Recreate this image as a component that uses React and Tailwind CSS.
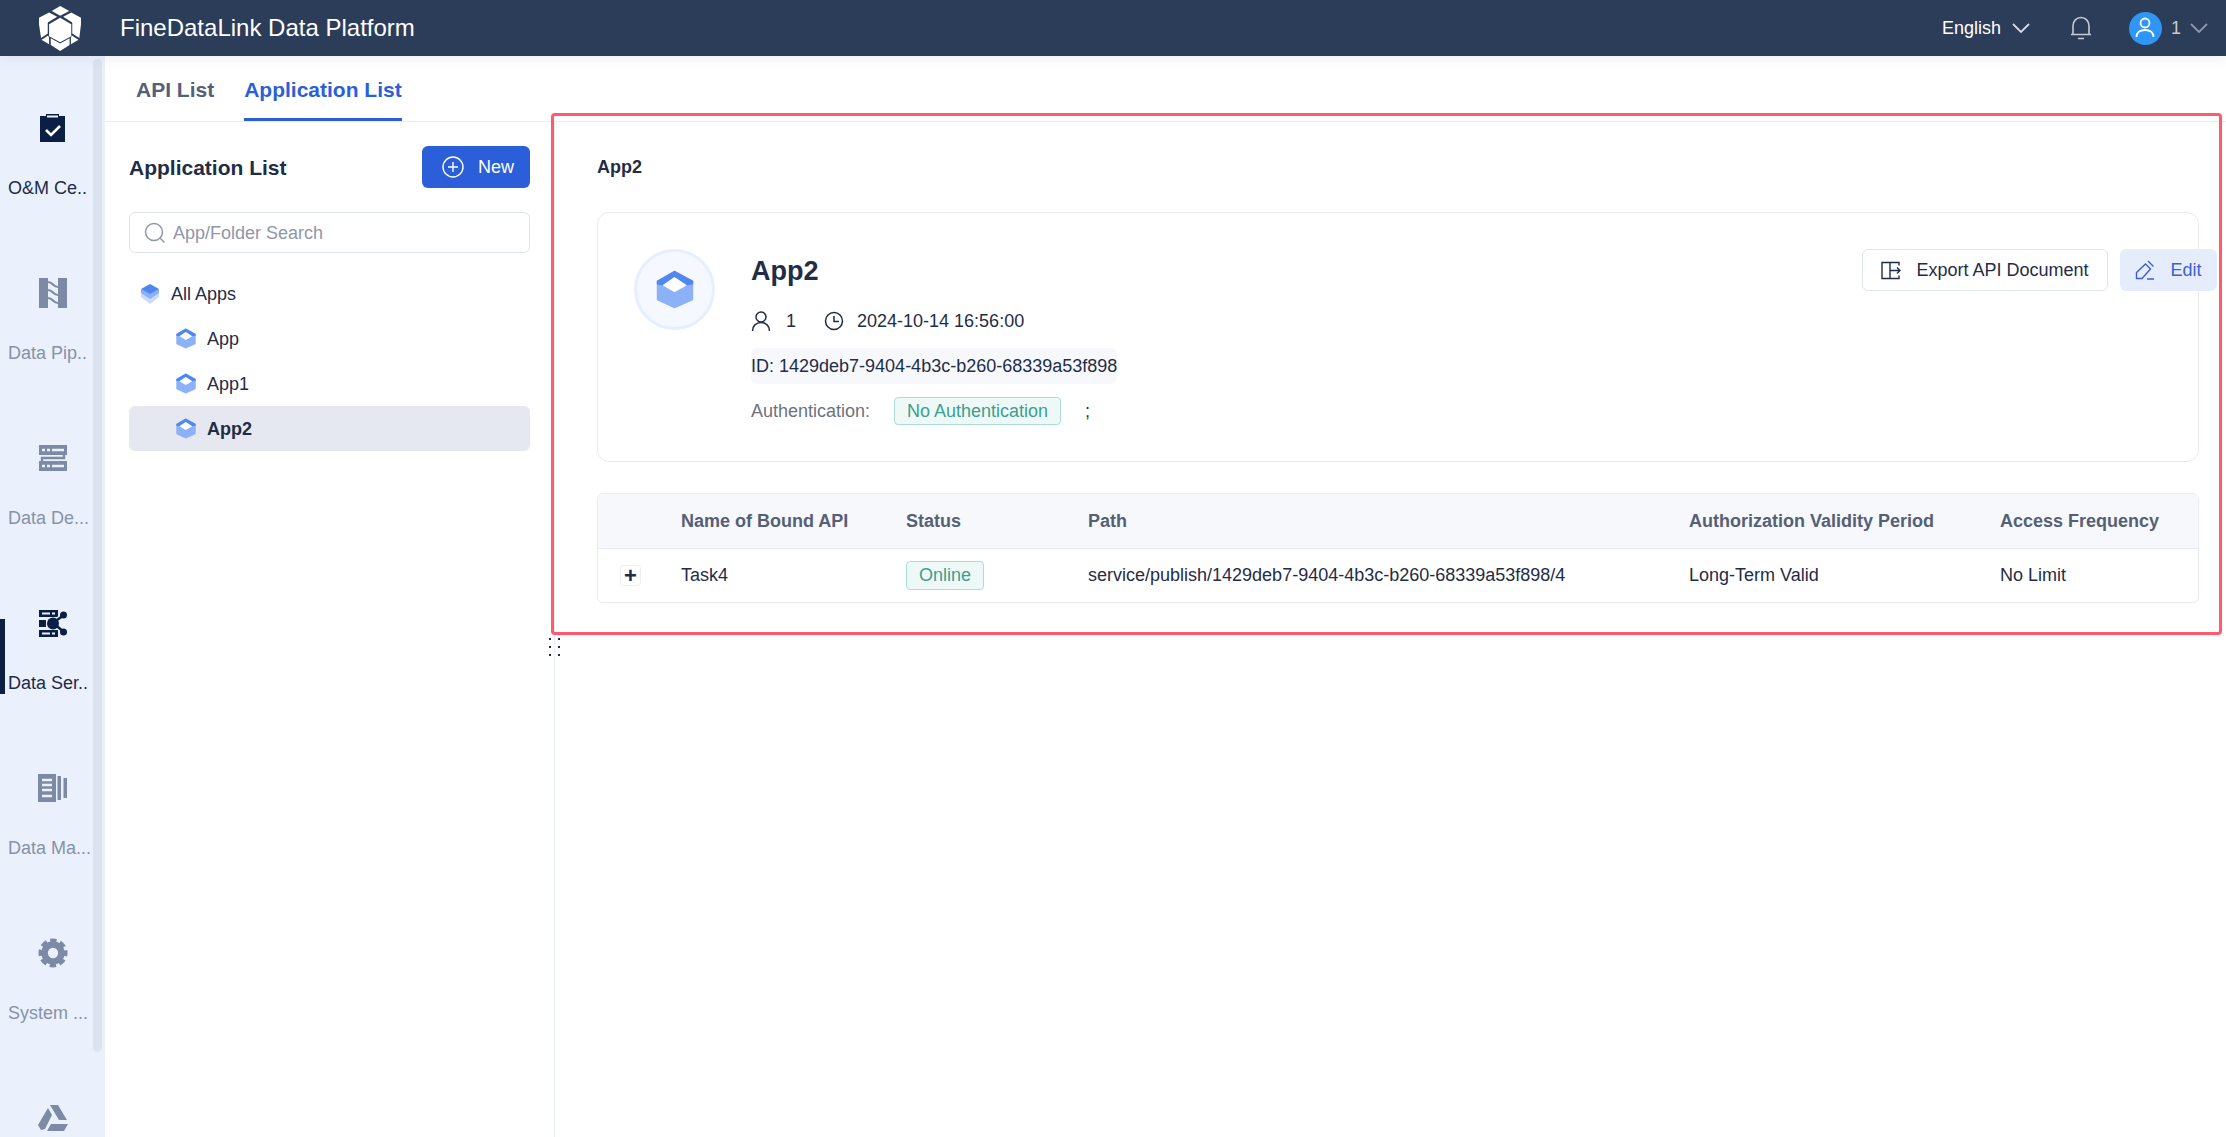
import React from "react";

function Chevron({ className }) {
  return (
    <svg viewBox="0 0 18 10" className={className} fill="none" stroke="currentColor" strokeWidth="1.8">
      <path d="M1 1l8 8 8-8" />
    </svg>
  );
}

function Logo() {
  return (
    <svg viewBox="120 12 125 134" className="w-[42px] h-[45px]" fill="#fff">
      <polygon points="183,12 210,27 183,41 158,27" />
      <polygon points="150,31 174,44 146,61 146,94 126,107 120,66 120,47" />
      <polygon points="216,31 192,44 219,61 219,94 240,107 245,66 245,47" />
      <polygon points="183,47 216,66 216,102 183,120 150,102 150,66" />
      <polygon points="127,113 147,100 150,106 150,126 130,114" />
      <polygon points="238,113 218,100 215,106 215,126 235,114" />
      <polygon points="155,108 183,124 211,108 211,128 183,146 155,128" />
    </svg>
  );
}

function Cube({ className }) {
  return (
    <svg viewBox="105 88 117 121" className={className}>
      <polygon points="162,92 218,122 218,180 162,205 109,180 109,122" fill="#8cb1f9" stroke="#8cb1f9" strokeWidth="4" strokeLinejoin="round" />
      <polygon points="162,90 220,122 220,132 200,136 162,110 125,136 107,132 107,122" fill="#5087f0" strokeLinejoin="round" />
      <polygon points="162,110 200,135 162,157 125,135" fill="#fff" />
    </svg>
  );
}

function Layers() {
  return (
    <svg viewBox="0 0 20 20" className="w-5 h-5">
      <polygon points="10,12 19,8 19,13 10,20 1,13 1,8" fill="#c9dafc" />
      <polygon points="10,8 19,5 19,9 10,15 1,9 1,5" fill="#8cb1f9" />
      <polygon points="10,0 19,5 10,10 1,5" fill="#4f86ee" />
    </svg>
  );
}

function ClipboardIcon() {
  return (
    <svg viewBox="0 0 25 28" className="w-[25px] h-[28px]">
      <path d="M0 2h6V0h13v2h6v26H0z" fill="#0b1f45" />
      <rect x="7" y="1.500" width="11" height="2" fill="#eaf0fc" />
      <path d="M6 16l5 5 9-9" fill="none" stroke="#fff" strokeWidth="2.6" />
    </svg>
  );
}

function PipeIcon() {
  return (
    <svg viewBox="0 0 28 30" className="w-7 h-[30px]">
      <rect x="0" y="0" width="9" height="30" fill="#7c8aa5" />
      <rect x="19" y="0" width="9" height="30" fill="#7c8aa5" />
      <path d="M9 4c5 0 5 5 10 5M9 12c5 0 5 5 10 5M9 20c5 0 5 5 10 5" stroke="#7c8aa5" strokeWidth="2.2" fill="none" />
    </svg>
  );
}

function ServerIcon() {
  return (
    <svg viewBox="0 0 28 26" className="w-7 h-[26px]">
      <rect x="0" y="0" width="28" height="10" fill="#7c8aa5" />
      <rect x="0" y="16" width="28" height="10" fill="#7c8aa5" />
      <path d="M25 10v3H3v3" stroke="#7c8aa5" strokeWidth="2.4" fill="none" />
      <path d="M3 5h3M8 5h3M13 5h12M3 21h3M8 21h3M13 21h12" stroke="#eaf0fc" strokeWidth="2.4" />
    </svg>
  );
}

function ServiceIcon() {
  return (
    <svg viewBox="0 0 28 28" className="w-7 h-7">
      <rect x="0" y="1" width="19" height="7" fill="#0b1f45" />
      <rect x="0" y="11" width="7" height="7" fill="#0b1f45" />
      <rect x="0" y="21" width="19" height="7" fill="#0b1f45" />
      <path d="M3 4.500h8M13 4.500h3M3 24.500h8M13 24.500h3" stroke="#eaf0fc" strokeWidth="2" />
      <path d="M14 14L25 6M14 14L25 23" stroke="#eaf0fc" strokeWidth="5" />
      <path d="M14 14L25 6M14 14L25 23" stroke="#0b1f45" strokeWidth="2.4" />
      <circle cx="14" cy="14.500" r="6" fill="#0b1f45" />
      <circle cx="24.500" cy="6" r="3.500" fill="#0b1f45" />
      <circle cx="24.500" cy="23" r="3.500" fill="#0b1f45" />
    </svg>
  );
}

function MarketIcon() {
  return (
    <svg viewBox="0 0 29 28" className="w-[29px] h-7">
      <rect x="0" y="0" width="18" height="28" fill="#7c8aa5" />
      <path d="M4 6h10M4 11h10M4 16h10M4 22h10" stroke="#eaf0fc" strokeWidth="2.4" />
      <rect x="19.500" y="2" width="3.500" height="24" fill="#7c8aa5" />
      <rect x="25.500" y="4" width="3.500" height="20" fill="#7c8aa5" />
    </svg>
  );
}

function GearIcon() {
  return (
    <svg viewBox="0 0 32 32" className="w-[30px] h-[30px]" fill="none" stroke="#7c8aa5">
      <circle cx="16" cy="16" r="9" strokeWidth="7" />
      <circle cx="16" cy="16" r="13.500" strokeWidth="4" strokeDasharray="6.800 3.800" strokeDashoffset="3.400" />
    </svg>
  );
}

function DriveIcon() {
  return (
    <svg viewBox="0 0 30 26" className="w-[30px] h-[26px]" fill="#7c8aa5">
      <polygon points="12,0 20,0 29,15 21,15" />
      <polygon points="10,3 14,10 7,24 3,25 0,20" />
      <polygon points="13,19 30,19 26,26 9,26" />
    </svg>
  );
}

const navItems = [
  { label: "O&M Ce..", icon: <ClipboardIcon />, dark: true },
  { label: "Data Pip..", icon: <PipeIcon /> },
  { label: "Data De...", icon: <ServerIcon /> },
  { label: "Data Ser..", icon: <ServiceIcon />, dark: true, active: true },
  { label: "Data Ma...", icon: <MarketIcon /> },
  { label: "System ...", icon: <GearIcon /> },
  { label: "", icon: <DriveIcon /> },
];

function Sidebar() {
  return (
    <div className="relative w-[105px] shrink-0 bg-[#ebf1fc] overflow-hidden pt-[56px]">
      <div className="absolute left-[93px] top-[3px] w-[9px] h-[993px] rounded-full bg-[#dbe3f1]" />
      {navItems.map((item) => (
        <div key={item.label} className="relative h-[165px] shrink-0">
          {item.active && <div className="absolute left-0 top-[12px] w-[5px] h-[75px] bg-[#0b1f45]" />}
          <div className="flex items-center justify-center h-[32px] w-[105px]">{item.icon}</div>
          <div className={`mt-[32px] pl-[8px] h-[24px] leading-[24px] text-[18px] whitespace-nowrap ${item.dark ? "text-[#1b2a4a]" : "text-[#8792a8]"}`}>
            {item.label}
          </div>
        </div>
      ))}
    </div>
  );
}

function TreeRow({ label, selected }) {
  return (
    <div className={`flex items-center h-[45px] pl-[47px] rounded-[6px] ${selected ? "bg-[#e5e8f0] font-bold" : ""}`}>
      <Cube className="w-[20px] h-[21px]" />
      <span className="ml-[11px] pt-[2px] text-[18px] text-[#1f2d47]">{label}</span>
    </div>
  );
}

function LeftPanel() {
  return (
    <div className="w-[450px] shrink-0 border-r border-[#e8ecf3] pl-[24px] pr-[24px] pt-[24px]">
      <div className="flex items-center justify-between h-[42px]">
        <span className="pt-[2px] text-[21px] font-bold text-[#1f2d47]">Application List</span>
        <button className="flex items-center w-[108px] h-[42px] pl-[20px] rounded-[6px] bg-[#2b5fd9] text-white text-[18px]">
          <svg viewBox="0 0 22 22" className="w-[22px] h-[22px]" fill="none" stroke="#fff" strokeWidth="1.400">
            <circle cx="11" cy="11" r="10" />
            <path d="M11 6v10M6 11h10" />
          </svg>
          <span className="ml-[14px]">New</span>
        </button>
      </div>
      <div className="flex items-center mt-[24px] h-[41px] pl-[14px] rounded-[6px] border border-[#dfe3ec]">
        <svg viewBox="0 0 22 22" className="w-[22px] h-[22px]" fill="none" stroke="#8f97a8" strokeWidth="1.500">
          <circle cx="10" cy="10" r="8.500" />
          <path d="M16 16l4.500 4.500" />
        </svg>
        <span className="ml-[7px] pt-[2px] text-[18px] text-[#8f97a8]">App/Folder Search</span>
      </div>
      <div className="mt-[18px]">
        <div className="flex items-center h-[45px] pl-[11px]">
          <Layers />
          <span className="ml-[11px] pt-[2px] text-[18px] text-[#1f2d47]">All Apps</span>
        </div>
        <TreeRow label="App" />
        <TreeRow label="App1" />
        <TreeRow label="App2" selected />
      </div>
    </div>
  );
}

function AppCard() {
  return (
    <div className="flex mt-[33px] h-[250px] rounded-[12px] border border-[#e8ebf3] pl-[36px] pt-[36px]">
      <div className="flex items-center justify-center w-[81px] h-[81px] shrink-0 rounded-full bg-[#f5f9ff] border-[3px] border-[#e6efff]">
        <Cube className="w-[38px] h-[39px]" />
      </div>
      <div className="ml-[36px]">
        <div className="h-[44px] leading-[44px] text-[27px] font-bold text-[#1f2d47]">App2</div>
        <div className="flex items-center mt-[14px] h-[28px] text-[18px] text-[#1f2d47]">
          <svg viewBox="0 0 20 20" className="w-[20px] h-[20px]" fill="none" stroke="#1f2d47" strokeWidth="1.500">
            <circle cx="10" cy="6" r="5" />
            <path d="M1.500 20c0-5 3.500-8.500 8.500-8.500s8.500 3.500 8.500 8.500" />
          </svg>
          <span className="ml-[15px]">1</span>
          <svg viewBox="0 0 20 20" className="w-[20px] h-[20px] ml-[28px]" fill="none" stroke="#1f2d47" strokeWidth="1.500">
            <circle cx="10" cy="10" r="8.500" />
            <path d="M10 5v5.500h5" />
          </svg>
          <span className="ml-[13px]">2024-10-14 16:56:00</span>
        </div>
        <div className="flex items-center mt-[13px] h-[36px] rounded-[6px] bg-[#f7f8fc] text-[18px] text-[#1f2d47] w-[366px] whitespace-nowrap">
          ID: 1429deb7-9404-4b3c-b260-68339a53f898
        </div>
        <div className="flex items-center mt-[13px] h-[28px] text-[18px]">
          <span className="w-[143px] text-[#6b7280]">Authentication:</span>
          <span className="flex items-center justify-center w-[167px] h-[28px] rounded-[4px] border border-[#a8e0d6] bg-[#eef9f7] text-[#3a9f8f]">
            No Authentication
          </span>
          <span className="ml-[24px] text-[#1f2d47]">;</span>
        </div>
      </div>
      <div className="flex flex-1 justify-end items-start gap-[12px] -mr-[19px]">
        <button className="flex items-center justify-center gap-[15px] w-[246px] h-[42px] rounded-[6px] border border-[#dfe3ec] text-[18px] text-[#1f2d47]">
          <svg viewBox="0 0 20 20" className="w-[20px] h-[20px]" fill="none" stroke="#1f2d47" strokeWidth="1.400">
            <path d="M1 2.500h8v16H1zM9 2.500h9v3M9 18.500h9v-3M9 10.500h10M16 7.500l3 3-3 3" />
          </svg>
          Export API Document
        </button>
        <button className="flex items-center justify-center gap-[15px] w-[97px] h-[42px] rounded-[6px] bg-[#e5edfd] text-[18px] text-[#3d5fd6]">
          <svg viewBox="0 0 20 20" className="w-[20px] h-[20px]" fill="none" stroke="#3d5fd6" strokeWidth="1.400">
            <path d="M1.500 12.500L10.500 4l5 5-8.500 9.500H1.500zM13 1l5.500 5.500M12 19h7" />
          </svg>
          Edit
        </button>
      </div>
    </div>
  );
}

function BoundTable() {
  return (
    <div className="mt-[31px] rounded-[6px] border border-[#e8ebf3] overflow-hidden text-[18px]">
      <div className="grid grid-cols-[83px_225px_182px_601px_311px_1fr] items-center h-[55px] bg-[#f7f8fc] border-b border-[#e8ebf3] font-bold text-[#555f75]">
        <span />
        <span>Name of Bound API</span>
        <span>Status</span>
        <span>Path</span>
        <span>Authorization Validity Period</span>
        <span>Access Frequency</span>
      </div>
      <div className="grid grid-cols-[83px_225px_182px_601px_311px_1fr] items-center h-[53px] text-[#1f2d47]">
        <span className="flex items-center justify-center ml-[22px] w-[21px] h-[21px] rounded-[3px] border border-[#eceff5] text-[22px] font-bold leading-none">+</span>
        <span>Task4</span>
        <span className="flex items-center justify-center w-[78px] h-[29px] rounded-[4px] border border-[#a8e0d6] bg-[#eef9f7] text-[#3a9f8f]">Online</span>
        <span>service/publish/1429deb7-9404-4b3c-b260-68339a53f898/4</span>
        <span>Long-Term Valid</span>
        <span>No Limit</span>
      </div>
    </div>
  );
}

function App() {
  return (
    <div className="relative flex flex-col h-screen overflow-hidden bg-white font-['Liberation_Sans',Arial,sans-serif]">
      <header className="relative z-10 flex items-center h-[56px] shrink-0 bg-[#2c3d59] shadow-[0_4px_12px_rgba(0,0,0,0.05)]">
        <div className="ml-[39px]"><Logo /></div>
        <span className="ml-[39px] text-[24px] text-white">FineDataLink Data Platform</span>
        <div className="flex items-center ml-auto">
          <span className="text-[18px] text-white">English</span>
          <Chevron className="ml-[11px] w-[18px] h-[10px] text-[#d5d9e0]" />
          <svg viewBox="0 0 20 24" className="ml-[41px] w-[20px] h-[24px]" fill="none" stroke="#c5cad3" strokeWidth="1.600">
            <path d="M2 18V10c0-5 3.500-8.500 8-8.500S18 5 18 10v8M0 18.500h20M7 22.500h6" />
          </svg>
          <div className="flex items-center justify-center ml-[38px] w-[33px] h-[33px] rounded-full bg-[#2f96f5]">
            <svg viewBox="0 0 20 22" className="w-[20px] h-[22px]" fill="none" stroke="#fff" strokeWidth="1.800">
              <circle cx="10" cy="6" r="4.500" />
              <path d="M1.500 20c0-4.500 3.500-7 8.500-7s8.500 2.500 8.500 7" />
            </svg>
          </div>
          <span className="ml-[9px] text-[18px] text-[#c5cad3]">1</span>
          <Chevron className="ml-[9px] mr-[18px] w-[18px] h-[10px] text-[#8f97a8]" />
        </div>
      </header>

      <div className="flex flex-1 min-h-0">
        <Sidebar />
        <main className="flex flex-col flex-1 min-w-0">
          <div className="flex items-end gap-[30px] h-[66px] shrink-0 pl-[31px] border-b border-[#e8ecf3] text-[21px] font-bold">
            <span className="h-[65px] leading-[68px] text-[#555f75]">API List</span>
            <span className="h-[65px] leading-[68px] text-[#2b5fd9] border-b-[3px] border-[#2b5fd9]">Application List</span>
          </div>
          <div className="relative flex flex-1 min-h-0">
            <LeftPanel />
            <div className="flex-1 min-w-0 pl-[42px] pr-[27px] pt-[33px]">
              <div className="h-[24px] leading-[24px] text-[18px] font-bold text-[#1f2d47]">App2</div>
              <AppCard />
              <BoundTable />
            </div>
            {/* resize handle on the divider */}
            <div className="absolute left-[444px] top-[516px] grid grid-cols-2 gap-x-[7px] gap-y-[6px]">
              {[0, 1, 2, 3, 4, 5].map((i) => (
                <span key={i} className="w-[2px] h-[2px] bg-[#1f2d47]" />
              ))}
            </div>
          </div>
        </main>
      </div>

      {/* annotation box */}
      <div className="absolute left-[551px] top-[113px] w-[1671px] h-[522px] rounded-[4px] border-[3px] border-[#ff5a6e] pointer-events-none" />
    </div>
  );
}

export default App;
